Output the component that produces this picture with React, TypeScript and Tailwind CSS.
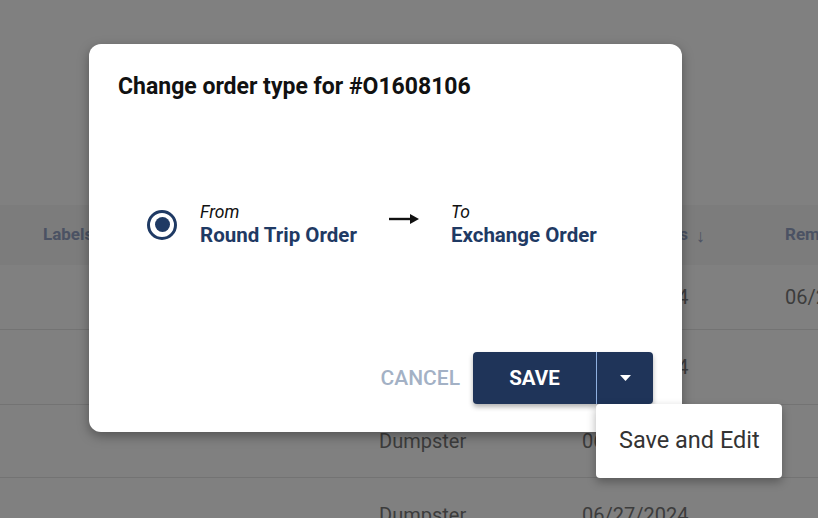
import React from "react";

const font = { fontFamily: "Roboto, 'Noto Sans', Arial, sans-serif" };

function BackgroundTable() {
  return (
    <div className="flex flex-col w-full">
      <div className="h-[205px]" />
      <div className="grid grid-cols-[379px_203px_203px_1fr] h-[60px] items-center bg-[#7c7c7c] text-[17px] font-bold text-[#4b5263] whitespace-nowrap overflow-hidden">
        <div className="pl-[43px]">Labels</div>
        <div>Type</div>
        <div className="flex items-center justify-end pr-[80px] gap-[8px]">
          <span>Dates</span>
          <span className="text-[18px] font-normal">↓</span>
        </div>
        <div>Removal</div>
      </div>
      <div className="grid grid-cols-[379px_203px_203px_1fr] h-[65px] items-center border-b border-[#737373] text-[20px] text-[#3c3c3c] whitespace-nowrap overflow-hidden">
        <div />
        <div>Dumpster</div>
        <div>06/27/2024</div>
        <div>06/28/2024</div>
      </div>
      <div className="grid grid-cols-[379px_203px_203px_1fr] h-[75px] items-center border-b border-[#737373] text-[20px] text-[#3c3c3c] whitespace-nowrap overflow-hidden">
        <div />
        <div>Dumpster</div>
        <div>06/27/2024</div>
        <div />
      </div>
      <div className="grid grid-cols-[379px_203px_203px_1fr] h-[73px] items-center border-b border-[#737373] text-[20px] text-[#3c3c3c] whitespace-nowrap overflow-hidden">
        <div />
        <div>Dumpster</div>
        <div>06/27/2024</div>
        <div />
      </div>
      <div className="grid grid-cols-[379px_203px_203px_1fr] h-[73px] items-center text-[20px] text-[#3c3c3c] whitespace-nowrap overflow-hidden">
        <div />
        <div>Dumpster</div>
        <div>06/27/2024</div>
        <div />
      </div>
    </div>
  );
}

function Arrow() {
  return (
    <svg width="30" height="12" viewBox="0 0 30 12">
      <line x1="0" y1="6" x2="24" y2="6" stroke="#111" strokeWidth="2.4" />
      <polygon points="21,1 30,6 21,11" fill="#111" />
    </svg>
  );
}

export default function App() {
  return (
    <div className="relative w-[818px] h-[518px] overflow-hidden bg-[#808080]" style={font}>
      <BackgroundTable />

      <div className="absolute left-[89px] top-[44px] w-[593px] h-[388px] bg-white rounded-[12px] shadow-[0_4px_12px_rgba(0,0,0,0.35)] flex flex-col pl-[29px] pr-[29px] pt-[29px] pb-[28px]">
        <h2 className="text-[23px] leading-[28px] font-bold text-[#111]">Change order type for #O1608106</h2>

        <div className="flex-1 flex items-center pl-[29px] pb-[4px]">
          <div className="flex items-center">
            <div className="w-[30px] h-[30px] rounded-full border-[3px] border-[#1f3a64] flex items-center justify-center">
              <div className="w-[15px] h-[15px] rounded-full bg-[#1f3a64]" />
            </div>
            <div className="ml-[23px] flex flex-col">
              <span className="italic text-[17.5px] leading-[21px] text-[#111]">From</span>
              <span className="font-bold text-[20.5px] leading-[25px] text-[#1f3a64]">Round Trip Order</span>
            </div>
            <div className="ml-[32px] mb-[12px] flex items-center">
              <Arrow />
            </div>
            <div className="ml-[32px] flex flex-col">
              <span className="italic text-[17.5px] leading-[21px] text-[#111]">To</span>
              <span className="font-bold text-[20.5px] leading-[25px] text-[#1f3a64]">Exchange Order</span>
            </div>
          </div>
        </div>

        <div className="flex items-center justify-end">
          <button className="text-[21px] font-medium text-[#a3b1c5] uppercase mr-[13px] pt-[2px]">Cancel</button>
          <div className="flex h-[52px] rounded-[4px] bg-[#1f3459] shadow-[0_3px_5px_rgba(0,0,0,0.3)] overflow-hidden">
            <button className="w-[123px] text-[20.5px] font-bold text-white uppercase">Save</button>
            <div className="w-px bg-[#8fb0e0]" />
            <button className="w-[56px] flex items-center justify-center">
              <svg width="11" height="6" viewBox="0 0 11 6">
                <polygon points="0,0 11,0 5.5,6" fill="#fff" />
              </svg>
            </button>
          </div>
        </div>
      </div>

      <div className="absolute left-[596px] top-[404px] w-[186px] h-[74px] bg-white rounded-[4px] shadow-[0_4px_10px_rgba(0,0,0,0.3)] flex items-center pl-[23px]">
        <span className="text-[23.5px] text-[#333] whitespace-nowrap">Save and Edit</span>
      </div>
    </div>
  );
}
